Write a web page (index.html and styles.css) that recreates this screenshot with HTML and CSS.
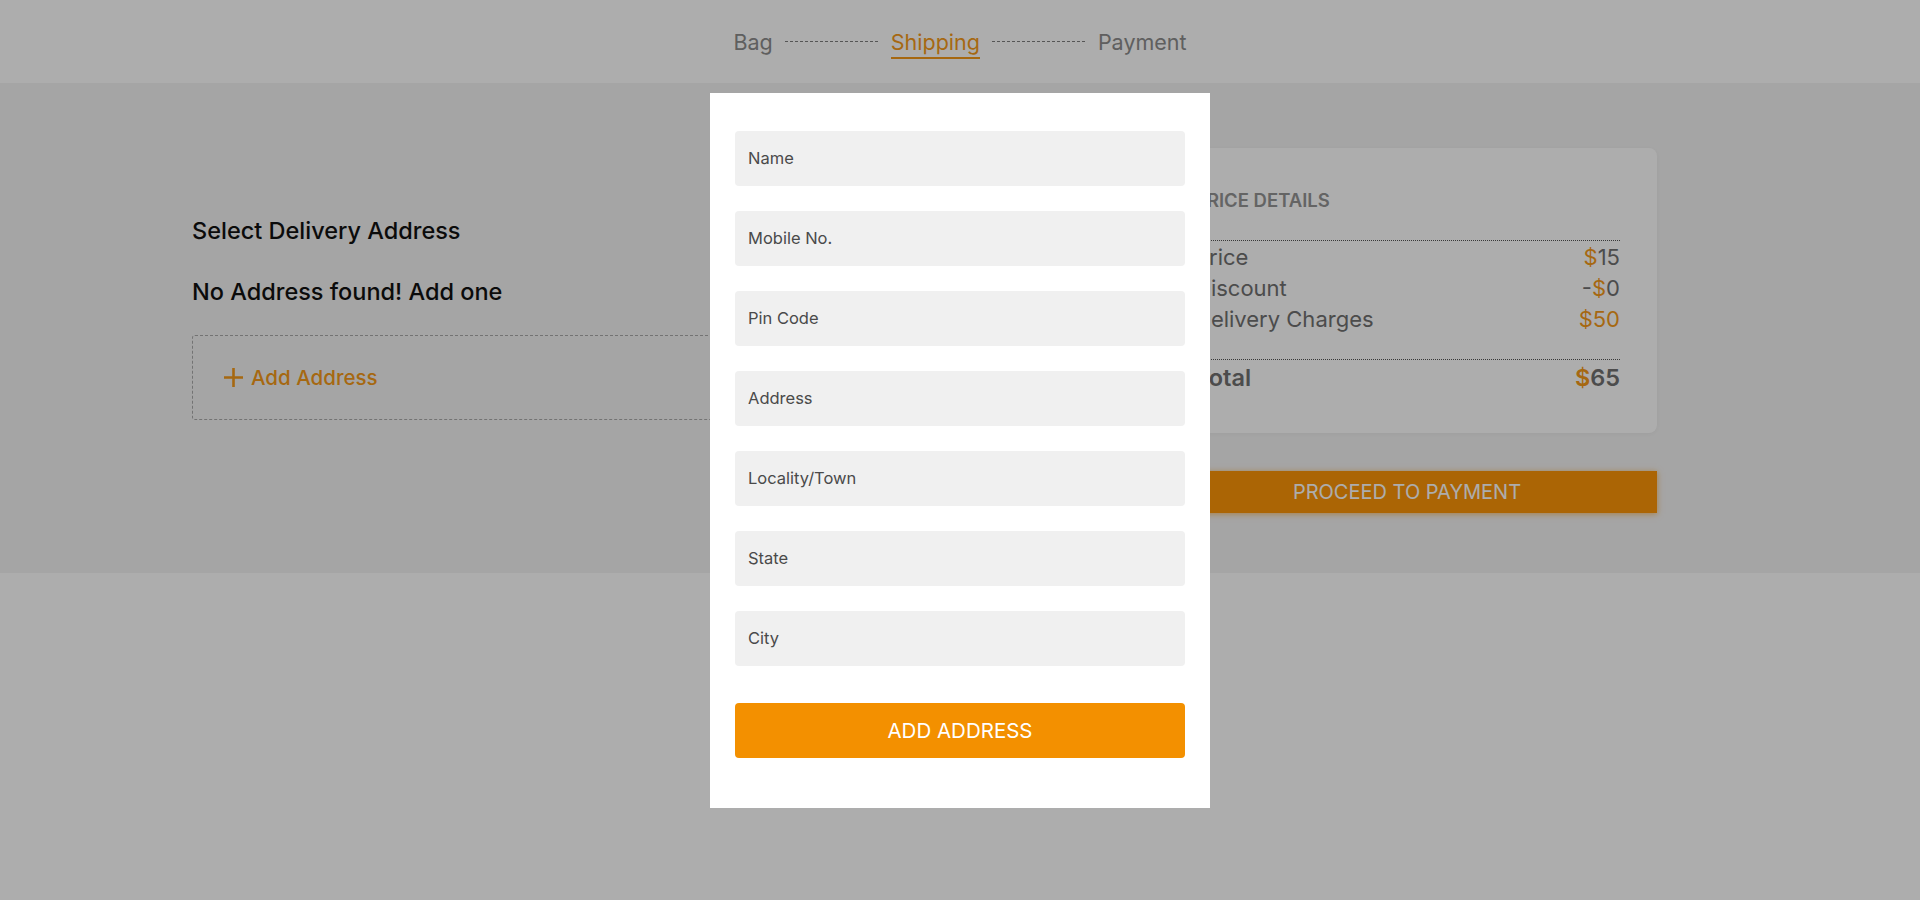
FILE: index.html
```html
<!DOCTYPE html>
<html lang="en">
<head>
    <meta charset="UTF-8">
    <meta name="viewport" content="width=device-width, initial-scale=1.0">
    <title>Shipping</title>
    <link rel="stylesheet" href="styles.css">
</head>
<body>
    <header class="checkout-header">
        <nav class="steps">
            <span class="step">Bag</span>
            <span class="step-line"></span>
            <span class="step active">Shipping</span>
            <span class="step-line"></span>
            <span class="step">Payment</span>
        </nav>
    </header>

    <main class="shipping">
        <section class="address-col">
            <h2 class="address-title">Select Delivery Address</h2>
            <h2 class="address-empty">No Address found! Add one</h2>
            <div class="add-address-box">
                <svg class="plus-icon" width="21" height="21" viewBox="0 0 21 21">
                    <path d="M10.5 1v19M1 10.5h19" stroke="currentColor" stroke-width="2.6" fill="none"/>
                </svg>
                <span>Add Address</span>
            </div>
        </section>

        <aside class="summary-col">
            <div class="price-card">
                <div class="price-title">PRICE DETAILS</div>
                <div class="price-list">
                    <div class="price-row">
                        <span>Price</span>
                        <span><span class="dollar">$</span>15</span>
                    </div>
                    <div class="price-row">
                        <span>Discount</span>
                        <span>-<span class="dollar">$</span>0</span>
                    </div>
                    <div class="price-row">
                        <span>Delivery Charges</span>
                        <span class="dollar">$50</span>
                    </div>
                </div>
                <div class="price-row price-total">
                    <span>Total</span>
                    <span><span class="dollar">$</span>65</span>
                </div>
            </div>
            <button class="proceed-btn">PROCEED TO PAYMENT</button>
        </aside>
    </main>

    <div class="overlay">
        <form class="address-modal" onsubmit="return false">
            <input type="text" placeholder="Name">
            <input type="text" placeholder="Mobile No.">
            <input type="text" placeholder="Pin Code">
            <input type="text" placeholder="Address">
            <input type="text" placeholder="Locality/Town">
            <input type="text" placeholder="State">
            <input type="text" placeholder="City">
            <button type="submit" class="modal-btn">ADD ADDRESS</button>
        </form>
    </div>
</body>
</html>
```

FILE: styles.css
```css
* {
    box-sizing: border-box;
}

body {
    margin: 0;
    background-color: #ffffff;
    font-family: "Inter", "Liberation Sans", sans-serif;
    color: #111;
    min-height: 100vh;
}

.checkout-header {
    height: 83px;
    background-color: #fff;
    display: flex;
    align-items: center;
    justify-content: center;
}

.steps {
    display: flex;
    align-items: center;
}

.step {
    font-size: 21.5px;
    line-height: 24px;
    color: #8c8c8c;
    padding: 5px 0 3px;
    border-bottom: 2px solid transparent;
}

.step.active {
    color: #f59a1a;
    border-bottom-color: #f59a1a;
}

.step-line {
    width: 94px;
    height: 1px;
    margin: 0 12px;
    background: repeating-linear-gradient(to right, #7e7e7e 0 3px, transparent 3px 5px);
}

.shipping {
    background-color: #f3f3f3;
    display: flex;
    gap: 57px;
    padding: 65px 263px 60px 192px;
}

.address-col {
    flex: 1;
    padding-top: 68px;
}

.address-title,
.address-empty {
    margin: 0;
    font-size: 23.5px;
    font-weight: 500;
    line-height: 30px;
    color: #111;
}

.address-empty {
    margin-top: 31px;
}

.add-address-box {
    margin-top: 28px;
    height: 85px;
    border: 1px dashed #aaa;
    border-radius: 3px;
    padding-left: 30px;
    display: flex;
    align-items: center;
    gap: 7px;
    color: #f59a1a;
    font-size: 20.5px;
    font-weight: 500;
}

.summary-col {
    width: 500px;
}

.price-card {
    background-color: #fff;
    border-radius: 8px;
    padding: 39px 37px 37px 38px;
    box-shadow: 0 1px 4px rgba(0, 0, 0, 0.04);
}

.price-title {
    font-size: 18.5px;
    font-weight: 600;
    line-height: 26px;
    color: #949494;
    margin-bottom: 27px;
}

.price-list {
    border-top: 1px dotted #555;
    padding: 1px 0 24px;
}

.price-row {
    display: flex;
    justify-content: space-between;
    font-size: 22px;
    line-height: 31px;
    color: #707070;
}

.dollar {
    color: #f59a1a;
}

.price-total {
    border-top: 1px dotted #555;
    font-size: 23.5px;
    font-weight: 600;
    line-height: 36px;
    color: #707070;
}

.proceed-btn {
    display: block;
    width: 100%;
    height: 42px;
    margin-top: 38px;
    border: none;
    background-color: #fc9608;
    color: #fff;
    font-family: inherit;
    font-size: 20px;
    box-shadow: 0 1px 6px rgba(252, 150, 8, 0.6);
}

.overlay {
    position: fixed;
    inset: 0;
    background-color: rgba(0, 0, 0, 0.32);
    display: flex;
    align-items: center;
    justify-content: center;
}

.address-modal {
    width: 500px;
    background-color: #fff;
    padding: 38px 25px 50px;
    display: flex;
    flex-direction: column;
    gap: 25px;
}

.address-modal input {
    height: 55px;
    border: none;
    border-radius: 4px;
    background-color: #f0f0f0;
    padding: 0 13px;
    font-family: inherit;
    font-size: 16.5px;
    color: #333;
    outline: none;
}

.address-modal input::placeholder {
    color: #4a4a4a;
}

.modal-btn {
    height: 55px;
    margin-top: 12px;
    border: none;
    border-radius: 4px;
    background-color: #f39000;
    color: #fff;
    font-family: inherit;
    font-size: 20.5px;
}
```
